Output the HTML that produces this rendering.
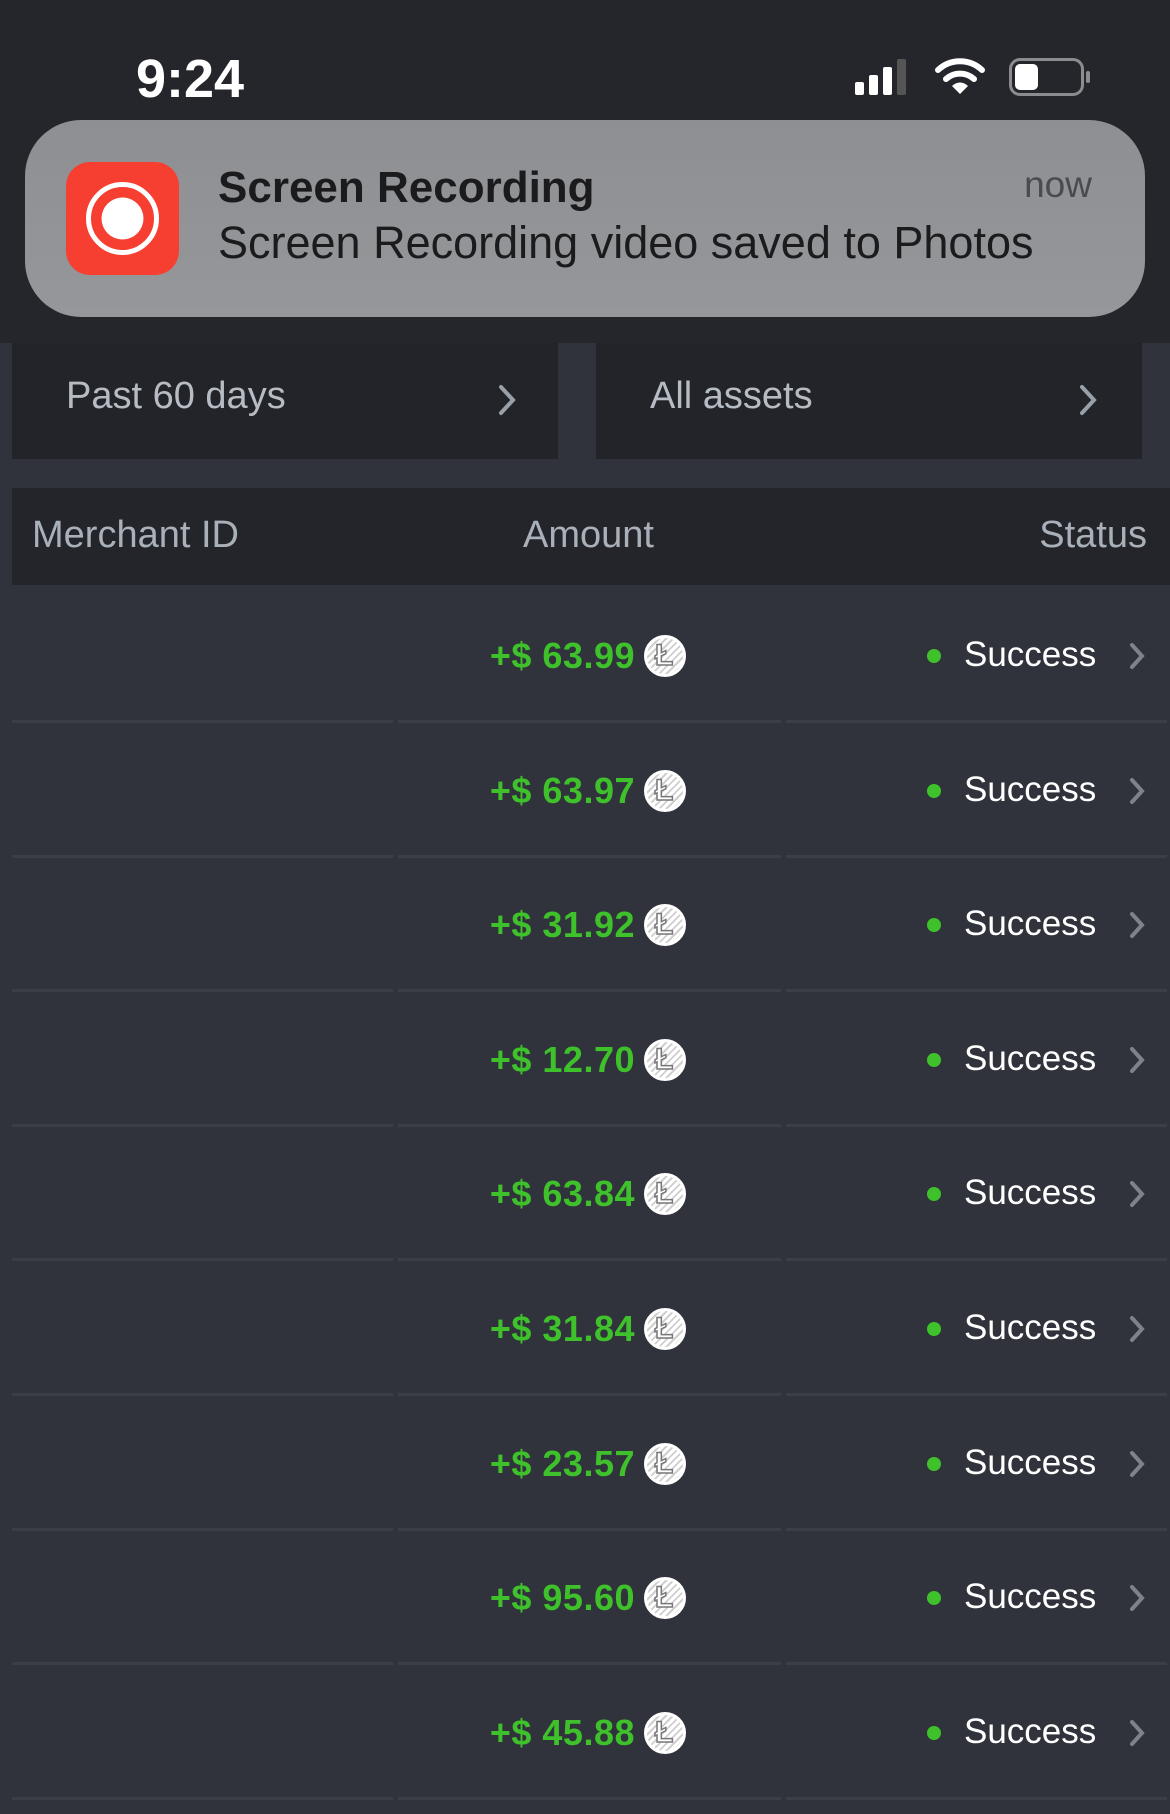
<!DOCTYPE html>
<html><head><meta charset="utf-8"><style>
*{margin:0;padding:0;box-sizing:border-box}
body{width:1170px;height:1814px;background:#30333b;font-family:"Liberation Sans",sans-serif;position:relative;overflow:hidden}
.abs{position:absolute}
.top{left:0;top:0;width:1170px;height:343px;background:#24262b}
.time{left:136px;top:48px;font-size:54px;font-weight:bold;color:#fff;letter-spacing:0px}
.notif{left:25px;top:120px;width:1120px;height:197px;border-radius:56px;background:linear-gradient(#8d8f93,#95979a)}
.icon{left:66px;top:162px;width:113px;height:113px;border-radius:24px;background:#f63e31}
.t1{left:218px;top:163px;font-size:44px;font-weight:bold;color:#1b1b1d}
.t2{left:218px;top:217px;font-size:45px;color:#1b1b1d}
.now{right:78px;top:164px;font-size:37px;color:#4a4b4e}
.filt{top:343px;height:116px;width:546px;background:#222429}
.filt span{position:absolute;left:54px;top:32px;font-size:38px;color:#b6bbc4}
.chev{position:absolute}
.hdr{left:12px;top:488px;width:1158px;height:97px;background:#23252a;color:#aab0ba;font-size:38px}
.hdr span{position:absolute;top:26px}
.sep{height:3px;background:#3b3e46}
.amt{font-size:36px;color:#3ec12b;font-weight:bold;text-align:right;width:300px;letter-spacing:0.5px}
.coin{width:42px;height:42px;border-radius:50%;background:repeating-linear-gradient(135deg,#fff 0 3px,#cfcfcf 3px 5px);border:3px solid #fff}
.coin b{position:absolute;left:8px;top:1px;font-size:30px;color:#fff;-webkit-text-stroke:1.5px #777;font-weight:bold}
.dot{width:14px;height:14px;border-radius:50%;background:#3ec12b}
.suc{font-size:35px;color:#fff}
</style></head><body>
<div class="abs top"></div>
<div class="abs time">9:24</div>
<svg class="abs" style="left:855px;top:58px" width="60" height="40"><rect x="0" y="24" width="9" height="13" rx="2" fill="#fff"/><rect x="14" y="17" width="9" height="20" rx="2" fill="#fff"/><rect x="28" y="9" width="9" height="28" rx="2" fill="#fff"/><rect x="42" y="1" width="9" height="36" rx="2" fill="#555"/></svg>
<svg class="abs" style="left:935px;top:56px" width="50" height="40"><path d="M3 14 A32 32 0 0 1 47 14" stroke="#fff" stroke-width="6" fill="none" stroke-linecap="round"/><path d="M11 23 A21 21 0 0 1 39 23" stroke="#fff" stroke-width="6" fill="none" stroke-linecap="round"/><path d="M25 38 L17 30 A11 11 0 0 1 33 30 Z" fill="#fff"/></svg>
<div class="abs" style="left:1009px;top:58px;width:75px;height:38px;border:3px solid #8a8c90;border-radius:11px"></div>
<div class="abs" style="left:1015px;top:64px;width:23px;height:26px;border-radius:5px;background:#fff"></div>
<div class="abs" style="left:1086px;top:71px;width:4px;height:12px;border-radius:2px;background:#8a8c90"></div>
<div class="abs notif"></div>
<div class="abs icon"><svg width="113" height="113"><circle cx="56.5" cy="56.5" r="34" stroke="#fff" stroke-width="5" fill="none"/><circle cx="56.5" cy="56.5" r="21" fill="#fff"/></svg></div>
<div class="abs t1">Screen Recording</div>
<div class="abs t2">Screen Recording video saved to Photos</div>
<div class="abs now">now</div>
<div class="abs filt" style="left:12px"><span>Past 60 days</span><svg class="chev" style="left:485px;top:40px" width="20" height="34"><path d="M4 4 L16 17 L4 30" stroke="#9aa0aa" stroke-width="4" fill="none" stroke-linecap="round"/></svg></div>
<div class="abs filt" style="left:596px"><span>All assets</span><svg class="chev" style="left:482px;top:40px" width="20" height="34"><path d="M4 4 L16 17 L4 30" stroke="#9aa0aa" stroke-width="4" fill="none" stroke-linecap="round"/></svg></div>
<div class="abs hdr"><span style="left:20px">Merchant ID</span><span style="left:511px">Amount</span><span style="right:23px">Status</span></div>
<div id="rows"></div>
<script>
var a=["63.99","63.97","31.92","12.70","63.84","31.84","23.57","95.60","45.88"];
var h="";
for(var i=0;i<a.length;i++){var c=656+i*134.6;
h+='<div class="abs amt" style="left:335px;top:'+(c-21)+'px">+$ '+a[i]+'</div>';
h+='<div class="abs coin" style="left:644px;top:'+(c-21)+'px"><b>Ł</b></div>';
h+='<div class="abs dot" style="left:927px;top:'+(c-7)+'px"></div>';
h+='<div class="abs suc" style="left:964px;top:'+(c-21)+'px">Success</div>';
h+='<svg class="abs" style="left:1128px;top:'+(c-14)+'px" width="20" height="30"><path d="M4 3 L14 14 L4 25" stroke="#7d828b" stroke-width="4" fill="none" stroke-linecap="round"/></svg>';
var s=720+i*134.6;
h+='<div class="abs sep" style="left:12px;width:381px;top:'+s+'px"></div><div class="abs sep" style="left:398px;width:383px;top:'+s+'px"></div><div class="abs sep" style="left:786px;width:381px;top:'+s+'px"></div>';}
document.getElementById("rows").innerHTML=h;
</script>
</body></html>
